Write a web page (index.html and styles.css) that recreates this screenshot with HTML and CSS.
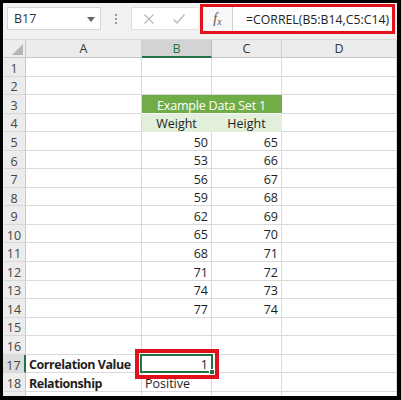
FILE: index.html
```html
<!DOCTYPE html>
<html>
<head>
<meta charset="utf-8">
<link rel="stylesheet" href="styles.css">
</head>
<body>
<div class="frame">
  <div class="toolbar">
    <div class="namebox">
      <span class="nb-text">B17</span>
      <svg class="nb-arrow" width="8" height="5" viewBox="0 0 8 5"><path d="M0 0 H8 L4 5 Z" fill="#666"/></svg>
    </div>
    <div class="dots"><i></i><i></i><i></i></div>
    <div class="editbox">
      <svg width="12" height="12" viewBox="0 0 12 12"><path d="M1.5 1.5 L10.5 10.5 M10.5 1.5 L1.5 10.5" stroke="#b9b9b9" stroke-width="1.3" fill="none"/></svg>
      <svg width="14" height="12" viewBox="0 0 14 12"><path d="M1.5 6.5 L5 10 L12.5 1.5" stroke="#b9b9b9" stroke-width="1.4" fill="none"/></svg>
    </div>
    <div class="formulagroup">
      <div class="fx"><span class="fx-f">f</span><span class="fx-x">x</span></div>
      <div class="formula">=CORREL(B5:B14,C5:C14)</div>
    </div>
  </div>
  <div class="sheet">
    <div class="corner"><svg width="11" height="11" viewBox="0 0 11 11"><path d="M11 0 V11 H0 Z" fill="#b5b5b5"/></svg></div>
    <div class="ch">A</div><div class="ch sel">B</div><div class="ch">C</div><div class="ch">D</div>

    <div class="rh">1</div><div class="c"></div><div class="c"></div><div class="c"></div><div class="c"></div>
    <div class="rh">2</div><div class="c"></div><div class="c"></div><div class="c"></div><div class="c"></div>
    <div class="rh">3</div><div class="c"></div><div class="c title">Example Data Set 1</div><div class="c"></div>
    <div class="rh">4</div><div class="c"></div><div class="c sub">Weight</div><div class="c sub">Height</div><div class="c"></div>
    <div class="rh">5</div><div class="c"></div><div class="c num">50</div><div class="c num">65</div><div class="c"></div>
    <div class="rh">6</div><div class="c"></div><div class="c num">53</div><div class="c num">66</div><div class="c"></div>
    <div class="rh">7</div><div class="c"></div><div class="c num">56</div><div class="c num">67</div><div class="c"></div>
    <div class="rh">8</div><div class="c"></div><div class="c num">59</div><div class="c num">68</div><div class="c"></div>
    <div class="rh">9</div><div class="c"></div><div class="c num">62</div><div class="c num">69</div><div class="c"></div>
    <div class="rh">10</div><div class="c"></div><div class="c num">65</div><div class="c num">70</div><div class="c"></div>
    <div class="rh">11</div><div class="c"></div><div class="c num">68</div><div class="c num">71</div><div class="c"></div>
    <div class="rh">12</div><div class="c"></div><div class="c num">71</div><div class="c num">72</div><div class="c"></div>
    <div class="rh">13</div><div class="c"></div><div class="c num">74</div><div class="c num">73</div><div class="c"></div>
    <div class="rh">14</div><div class="c"></div><div class="c num">77</div><div class="c num">74</div><div class="c"></div>
    <div class="rh">15</div><div class="c"></div><div class="c"></div><div class="c"></div><div class="c"></div>
    <div class="rh">16</div><div class="c"></div><div class="c"></div><div class="c"></div><div class="c"></div>
    <div class="rh sel">17</div><div class="c bold">Correlation Value</div><div class="c num active">1<span class="selbox"></span><span class="handle"></span><span class="redbox"></span></div><div class="c"></div><div class="c"></div>
    <div class="rh">18</div><div class="c bold">Relationship</div><div class="c">Positive</div><div class="c"></div><div class="c"></div>
    <div class="rh"></div><div class="c"></div><div class="c"></div><div class="c"></div><div class="c"></div>
  </div>
</div>
</body>
</html>
```

FILE: styles.css
```css
* { box-sizing: border-box; }
html, body { margin: 0; padding: 0; background: #000; }
.frame {
  width: 401px;
  height: 400px;
  border-style: solid;
  border-color: #000;
  border-width: 3px 4px 4px 3px;
  background: #fff;
  overflow: hidden;
  font-family: "Open Sans", "Liberation Sans", sans-serif;
  color: #222;
}
.toolbar {
  height: 37px;
  background: #f1f1f1;
  display: flex;
  align-items: flex-start;
  border-bottom: 1px solid #dadada;
}
.namebox {
  margin: 4px 0 0 4px;
  width: 94px;
  height: 23px;
  background: #fff;
  border: 1px solid #d6d6d6;
  display: flex;
  align-items: center;
  justify-content: space-between;
  padding: 0 5px 0 6px;
}
.nb-text { font-size: 12.5px; color: #333; }
.nb-arrow { margin-top: 1px; }
.dots {
  margin: 11px 0 0 14px;
  width: 3px;
  display: flex;
  flex-direction: column;
  gap: 2px;
}
.dots i { display: block; width: 2px; height: 2px; background: #9a9a9a; }
.editbox {
  margin: 4px 0 0 13px;
  width: 67px;
  height: 23px;
  background: #fff;
  border: 1px solid #e0e0e0;
  border-right: none;
  display: flex;
  align-items: center;
  justify-content: space-around;
  padding: 0 4px 0 2px;
}
.formulagroup {
  margin: 1px 0 0 2px;
  width: 195px;
  height: 30px;
  border: 3px solid #e2121b;
  display: flex;
}
.fx {
  width: 30px;
  background: #f8f8f8;
  border-right: 1px solid #d0d0d0;
  display: flex;
  align-items: center;
  justify-content: center;
  font-family: "Liberation Serif", serif;
  font-style: italic;
  color: #555;
}
.fx-f { font-size: 14px; }
.fx-x { font-size: 10px; margin-top: 4px; }
.formula {
  flex: 1;
  background: #fff;
  font-size: 12.3px;
  color: #222;
  padding-left: 13px;
  display: flex;
  align-items: center;
  white-space: nowrap;
}
.sheet {
  display: grid;
  grid-template-columns: 23px 116px 70px 70px 115px;
  grid-template-rows: 18px;
  grid-auto-rows: 18.55px;
  height: 356px;
  overflow: hidden;
  font-size: 12.5px;
}
.corner {
  background: #ececec;
  border-right: 1px solid #c8c8c8;
  border-bottom: 1px solid #c8c8c8;
  display: flex;
  align-items: flex-end;
  justify-content: flex-end;
  padding: 0 2px 2px 0;
}
.ch {
  background: #ececec;
  border-right: 1px solid #d0d0d0;
  border-bottom: 1px solid #c8c8c8;
  display: flex;
  align-items: center;
  justify-content: center;
  color: #333;
  font-size: 12.5px;
}
.ch.sel {
  background: #d3d3d3;
  color: #217346;
  border-bottom: 2px solid #217346;
  border-right-color: #bcbcbc;
}
.rh {
  background: #ececec;
  border-right: 1px solid #c8c8c8;
  border-bottom: 1px solid #d8d8d8;
  display: flex;
  align-items: center;
  justify-content: center;
  color: #444;
  font-size: 12.5px;
  padding-top: 3px;
}
.rh.sel {
  background: #dcdcdc;
  border-right: 2px solid #217346;
}
.c {
  border-right: 1px solid #dadada;
  border-bottom: 1px solid #dadada;
  padding: 0 3px 0 3px;
  display: flex;
  align-items: flex-end;
  line-height: 14px;
  white-space: nowrap;
  color: #1e1e1e;
}
.num { justify-content: flex-end; }
.bold { font-weight: 700; letter-spacing: -0.45px; }
.title {
  grid-column: span 2;
  background: #70ad47;
  color: #fff;
  justify-content: center;
  border-right-color: #70ad47;
  border-bottom-color: #fff;
  letter-spacing: -0.2px;
}
.sub {
  background: #e2efda;
  justify-content: center;
  border-right-color: #e2efda;
  border-bottom-color: #e2efda;
}
.active { position: relative; }
.selbox {
  position: absolute;
  left: -2px;
  top: -1px;
  right: -2px;
  bottom: -1px;
  border: 2px solid #217346;
}
.handle {
  position: absolute;
  right: -4px;
  bottom: -3px;
  width: 6px;
  height: 6px;
  background: #217346;
  border: 1px solid #fff;
}
.redbox {
  position: absolute;
  left: -7px;
  top: -6px;
  right: -8px;
  bottom: -7px;
  border: 4px solid #e2121b;
}
```
